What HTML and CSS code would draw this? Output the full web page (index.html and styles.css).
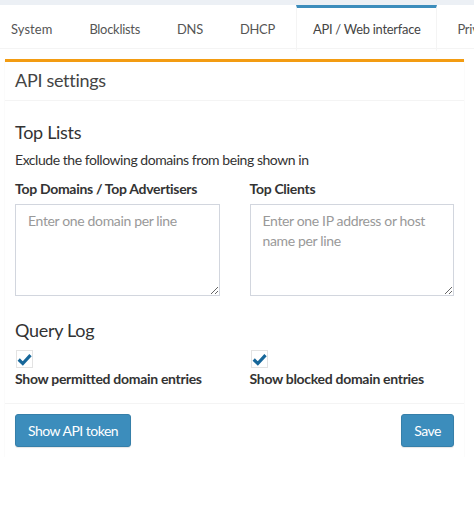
FILE: index.html
```html
<!DOCTYPE html>
<html>
<head>
<meta charset="utf-8">
<link rel="stylesheet" href="styles.css">
</head>
<body>
<div class="wrap">
  <ul class="tabs">
    <li class="tab">System</li>
    <li class="tab">Blocklists</li>
    <li class="tab">DNS</li>
    <li class="tab">DHCP</li>
    <li class="tab active">API / Web interface</li>
    <li class="tab">Privacy</li>
  </ul>
  <div class="tab-content">
    <div class="box">
      <div class="box-header">API settings</div>
      <div class="box-body">
        <h4 class="sec">Top Lists</h4>
        <p class="desc">Exclude the following domains from being shown in</p>
        <div class="row">
          <div class="col">
            <label class="lbl">Top Domains / Top Advertisers</label>
            <textarea class="ta" placeholder="Enter one domain per line"></textarea>
          </div>
          <div class="col">
            <label class="lbl">Top Clients</label>
            <textarea class="ta" placeholder="Enter one IP address or host name per line"></textarea>
          </div>
        </div>
        <h4 class="sec sec2">Query Log</h4>
        <div class="row">
          <div class="col">
            <span class="cb"><svg viewBox="0 0 16 16" width="15" height="15"><path d="M1.8 8 L6.2 12.3 L14.4 3.4" fill="none" stroke="#17679a" stroke-width="3.4" stroke-linejoin="miter"/></svg></span>
            <div class="cbl">Show permitted domain entries</div>
          </div>
          <div class="col">
            <span class="cb"><svg viewBox="0 0 16 16" width="15" height="15"><path d="M1.8 8 L6.2 12.3 L14.4 3.4" fill="none" stroke="#17679a" stroke-width="3.4" stroke-linejoin="miter"/></svg></span>
            <div class="cbl">Show blocked domain entries</div>
          </div>
        </div>
      </div>
      <div class="box-footer">
        <button class="btn">Show API token</button>
        <button class="btn">Save</button>
      </div>
    </div>
  </div>
</div>
</body>
</html>
```
FILE: styles.css
```css
html, body {
  margin: 0;
  padding: 0;
  background: #ffffff;
}
body {
  font-family: Lato, "Liberation Sans", sans-serif;
  font-size: 14px;
  color: #333;
  padding-top: 5px;
  background: linear-gradient(#ecf0f5 0, #ecf0f5 5px, #fff 5px);
  min-height: 511px;
  box-sizing: border-box;
  overflow: hidden;
}
.wrap {
  background: #fff;
  width: 474px;
  overflow: hidden;
}
.tabs {
  list-style: none;
  margin: 0 0 0 -5px;
  padding: 0;
  display: flex;
  white-space: nowrap;
  border-bottom: 1px solid #f4f4f4;
  height: 43px;
}
.tab {
  margin-right: 5px;
  padding: 2px 15px 0;
  border: 1px solid transparent;
  border-top: 3px solid transparent;
  color: #555;
  font-size: 12.9px;
  line-height: 38px;
  letter-spacing: -0.25px;
}
.tab:first-child {
  letter-spacing: 0.1px;
}
.tab.active {
  border-top-color: #3c8dbc;
  border-left-color: #f4f4f4;
  border-right-color: #f4f4f4;
  border-bottom-color: #fff;
  color: #444;
  height: 40px;
  padding-left: 16px;
  padding-right: 15px;
}
.tab-content {
  padding: 10px 10px 0 5px;
}
.box {
  border-top: 3px solid #f39c12;
  box-shadow: 0 1px 1px rgba(0,0,0,0.1);
  background: #fff;
  width: 459px;
}
.box-header {
  padding: 9px 10px 11px;
  font-size: 18px;
  line-height: 18px;
  color: #444;
  border-bottom: 1px solid #f4f4f4;
  letter-spacing: -0.3px;
}
.box-body {
  padding: 10px 10px 14px;
}
.sec {
  margin: 11px 0 8px;
  font-size: 18px;
  font-weight: normal;
  line-height: 20px;
  color: #333;
  letter-spacing: -0.3px;
}
.sec2 {
  margin-top: 24px;
  margin-bottom: 10px;
}
.desc {
  margin: 0 0 9px;
  line-height: 20px;
  letter-spacing: -0.45px;
}
.row {
  display: grid;
  grid-template-columns: 1fr 1fr;
  column-gap: 30px;
}
.col {
  min-width: 0;
}
.lbl {
  display: block;
  font-weight: bold;
  line-height: 20px;
  margin-bottom: 5px;
  letter-spacing: -0.3px;
}
.ta {
  display: block;
  width: 100%;
  box-sizing: border-box;
  height: 92px;
  border: 1px solid #d2d6de;
  border-radius: 0;
  padding: 6px 12px;
  font-family: inherit;
  font-size: 14px;
  line-height: 20px;
  color: #555;
  resize: vertical;
  margin: 0;
  letter-spacing: -0.35px;
}
.ta::placeholder {
  color: #999;
}
.cb {
  display: flex;
  align-items: center;
  justify-content: center;
  width: 15px;
  height: 16px;
  border: 1px solid #e3e3e3;
  margin-left: 1px;
  background: #fff;
}
.cbl {
  font-weight: bold;
  line-height: 20px;
  margin-top: 1px;
  letter-spacing: -0.3px;
}
.box-footer {
  border-top: 1px solid #f4f4f4;
  padding: 10px;
  display: flex;
  justify-content: space-between;
}
.btn {
  font-family: inherit;
  font-size: 14px;
  line-height: 20px;
  padding: 6px 12px;
  height: 33px;
  background: #3c8dbc;
  border: 1px solid #367fa9;
  border-radius: 3px;
  color: #fff;
  letter-spacing: -0.5px;
  box-shadow: 0 1px 1px rgba(0,0,0,0.1);
}
```
